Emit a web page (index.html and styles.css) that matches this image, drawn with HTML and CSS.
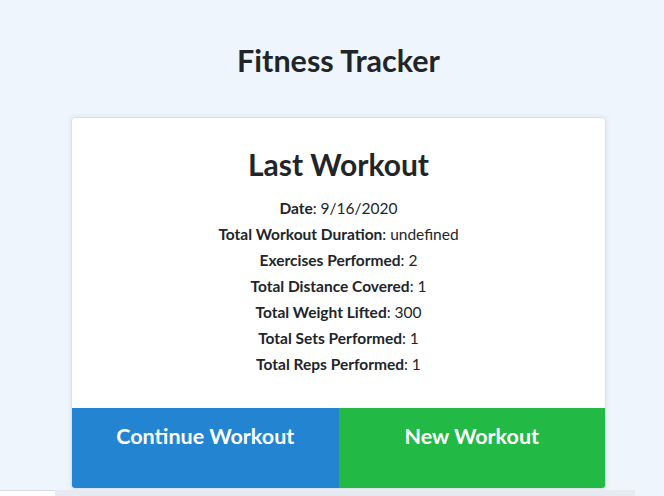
FILE: index.html
```html
<!DOCTYPE html>
<html lang="en">
<head>
    <meta charset="UTF-8">
    <meta name="viewport" content="width=device-width, initial-scale=1.0">
    <title>Fitness Tracker</title>
    <link rel="stylesheet" href="styles.css">
</head>
<body>
    <main class="wrapper">
        <h1 class="title">Fitness Tracker</h1>
        <div class="card">
            <h2 class="card-title">Last Workout</h2>
            <ul class="stats">
                <li><strong>Date</strong>: 9/16/2020</li>
                <li><strong>Total Workout Duration</strong>: undefined</li>
                <li><strong>Exercises Performed</strong>: 2</li>
                <li><strong>Total Distance Covered</strong>: 1</li>
                <li><strong>Total Weight Lifted</strong>: 300</li>
                <li><strong>Total Sets Performed</strong>: 1</li>
                <li><strong>Total Reps Performed</strong>: 1</li>
            </ul>
            <div class="actions">
                <a href="#" class="btn btn-continue">Continue Workout</a>
                <a href="#" class="btn btn-new">New Workout</a>
            </div>
        </div>
    </main>
    <div class="bottom">
        <div class="bottom-left"></div>
        <div class="bottom-bar"></div>
    </div>
</body>
</html>
```

FILE: styles.css
```css
body {
    font-family: Lato, "Open Sans", sans-serif;
    margin: 0;
    padding: 0;
    background-color: #eff5fd;
    color: #212529;
}

.wrapper {
    width: 535px;
    margin-left: 71px;
    padding-top: 42px;
}

.title {
    margin: 0 0 39px;
    font-size: 30.5px;
    font-weight: bold;
    text-align: center;
    line-height: 36px;
}

.card {
    background-color: #fff;
    border: 1px solid #dde1e6;
    border-radius: 4px;
    box-shadow: 0 0 6px rgba(0, 0, 0, 0.08);
    overflow: hidden;
    text-align: center;
}

.card-title {
    margin: 28px 0 13px;
    font-size: 30px;
    font-weight: bold;
    line-height: 36px;
}

.stats {
    list-style: none;
    margin: 0 0 31px;
    padding: 0;
    font-size: 15.5px;
    line-height: 26px;
}

.stats strong {
    font-weight: bold;
}

.actions {
    display: flex;
    height: 80px;
}

.btn {
    flex: 1;
    padding-top: 16px;
    color: #fff;
    text-decoration: none;
    font-size: 21.5px;
    font-weight: bold;
    line-height: 24px;
}

.btn-continue {
    background-color: #2384d1;
}

.btn-new {
    background-color: #22b945;
}

.bottom {
    display: flex;
    margin-top: 1px;
    height: 8px;
}

.bottom-left {
    width: 55px;
    background-color: #fff;
    border-top: 1px solid #d8dce2;
}

.bottom-bar {
    width: 580px;
    background-color: #e6ebf1;
}
```
